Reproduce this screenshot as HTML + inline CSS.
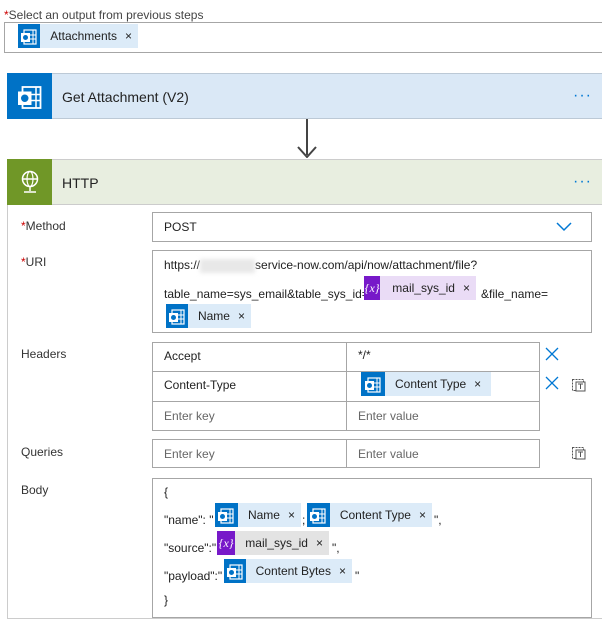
<!DOCTYPE html>
<html><head><style>
*{box-sizing:border-box;margin:0;padding:0}
body{width:602px;height:615px;overflow:hidden;background:#fff;font-family:"Segoe UI","Liberation Sans",sans-serif;font-size:12px;color:#222;position:relative}
.a{position:absolute}
.box{position:absolute;border:1px solid #a6a6a6;background:#fff}
.tok{position:absolute;height:24px;background:#dcebf8;display:flex;align-items:center;font-size:12px;color:#222;white-space:nowrap}
.tok .ic{width:24px;height:24px;background:#0072c6;display:flex;align-items:center;justify-content:center;margin-right:10px}
.tok.v .ic{background:#7719c9;color:#fff;font-family:"Liberation Serif",serif;font-style:italic;font-size:12px}
.tok .x{margin-left:8px;margin-right:6px;font-size:12px}
.lbl{position:absolute;left:21px;font-size:12px;color:#333}
.lbl b{color:#c00;font-weight:normal}
.cell{position:absolute;font-size:12px}
.ph{color:#666}
</style></head><body>
<svg width="0" height="0" style="position:absolute"><defs>
<g id="ol"><rect x="5" y="4" width="12" height="14" fill="none" stroke="#fff" stroke-width="1.2"/><rect x="2" y="7" width="9" height="9" fill="#fff"/><circle cx="6.5" cy="11.5" r="2.5" fill="#0072c6"/><path d="M11 9h6M11 13h6M14 4v14" stroke="#fff" stroke-width="1"/></g>
</defs></svg>
<div class="a" style="left:4px;top:8px;font-size:12px;color:#444"><span style="color:#c00">*</span>Select an output from previous steps</div>
<div class="box" style="left:4px;top:22px;width:600px;height:31px"></div>
<div class="tok" style="left:18px;top:24px;width:120px"><div class="ic"><svg width="20" height="20" viewBox="0 0 20 20"><use href="#ol"/></svg></div>Attachments<span class="x">×</span></div>

<div class="a" style="left:7px;top:73px;width:597px;height:46px;background:#dae8f6;border:1px solid #bcc9d6"></div>
<div class="a" style="left:7px;top:73px;width:45px;height:46px;background:#0072c6;display:flex;align-items:center;justify-content:center"><svg width="30" height="30" viewBox="0 0 20 20"><use href="#ol"/></svg></div>
<div class="a" style="left:62px;top:89px;font-size:14px">Get Attachment (V2)</div>
<div class="a" style="left:573px;top:87px;font-size:16px;color:#0078d4;letter-spacing:1px">···</div>

<div class="a" style="left:306px;top:119px;width:2px;height:36px;background:#444"></div>
<svg class="a" style="left:297px;top:146px" width="20" height="12"><path d="M1 1l9 10 9-10" fill="none" stroke="#444" stroke-width="2"/></svg>

<div class="a" style="left:7px;top:159px;width:597px;height:460px;border:1px solid #ccc;background:#fff"></div>
<div class="a" style="left:7px;top:159px;width:597px;height:46px;background:#e8eee0;border:1px solid #ccc"></div>
<div class="a" style="left:7px;top:159px;width:45px;height:46px;background:#709727;display:flex;align-items:center;justify-content:center"><svg width="22" height="26" viewBox="0 0 22 26"><circle cx="11" cy="10" r="7.5" fill="none" stroke="#fff" stroke-width="1.5"/><ellipse cx="11" cy="10" rx="3" ry="7.5" fill="none" stroke="#fff" stroke-width="1.2"/><path d="M3.5 10h15M11 18v4M5 23h12" stroke="#fff" stroke-width="1.5"/></svg></div>
<div class="a" style="left:62px;top:175px;font-size:14px">HTTP</div>
<div class="a" style="left:573px;top:173px;font-size:16px;color:#0078d4;letter-spacing:1px">···</div>

<div class="lbl" style="top:219px"><b>*</b>Method</div>
<div class="box" style="left:152px;top:212px;width:440px;height:30px"></div>
<div class="cell" style="left:164px;top:220px">POST</div>
<svg class="a" style="left:556px;top:222px" width="16" height="10"><path d="M1 1l7 7 7-7" fill="none" stroke="#0078d4" stroke-width="1.5"/></svg>

<div class="lbl" style="top:255px"><b>*</b>URI</div>
<div class="box" style="left:152px;top:250px;width:440px;height:83px"></div>
<div class="cell" style="left:164px;top:258px">https://<span style="display:inline-block;width:55px;height:14px;background:#e8e8e8;vertical-align:middle;filter:blur(2px)"></span>service-now.com/api/now/attachment/file?</div>
<div class="cell" style="left:164px;top:287px">table_name=sys_email&amp;table_sys_id=</div>
<div class="tok v" style="left:364px;top:276px;width:112px;background:#eadcf6"><div class="ic">{<i>x</i>}</div><span style="margin-left:2px">mail_sys_id</span><span class="x">×</span></div>
<div class="cell" style="left:481px;top:287px">&amp;file_name=</div>
<div class="tok" style="left:166px;top:304px;width:85px"><div class="ic"><svg width="20" height="20" viewBox="0 0 20 20"><use href="#ol"/></svg></div>Name<span class="x">×</span></div>

<div class="lbl" style="top:347px">Headers</div>
<div class="box" style="left:152px;top:342px;width:388px;height:89px"></div>
<div class="a" style="left:346px;top:342px;width:1px;height:89px;background:#a6a6a6"></div>
<div class="a" style="left:152px;top:371px;width:388px;height:1px;background:#a6a6a6"></div>
<div class="a" style="left:152px;top:401px;width:388px;height:1px;background:#a6a6a6"></div>
<div class="cell" style="left:164px;top:349px">Accept</div>
<div class="cell" style="left:358px;top:348px">*/*</div>
<div class="cell" style="left:164px;top:378px">Content-Type</div>
<div class="tok" style="left:361px;top:372px;width:130px;background:#dcebf8"><div class="ic"><svg width="20" height="20" viewBox="0 0 20 20"><use href="#ol"/></svg></div>Content Type<span class="x">×</span></div>
<div class="cell ph" style="left:164px;top:409px">Enter key</div>
<div class="cell ph" style="left:358px;top:409px">Enter value</div>
<svg class="a" style="left:545px;top:347px" width="14" height="14"><path d="M1 1l12 12M13 1L1 13" stroke="#0078d4" stroke-width="1.3"/></svg>
<svg class="a" style="left:545px;top:376px" width="14" height="14"><path d="M1 1l12 12M13 1L1 13" stroke="#0078d4" stroke-width="1.3"/></svg>
<svg class="a" style="left:571px;top:376px" width="15" height="16"><rect x="1.5" y="3.5" width="11" height="11" fill="none" stroke="#555" stroke-dasharray="2 1"/><rect x="5" y="6" width="9" height="9" fill="#fff" stroke="#555"/><path d="M7 8h5M9.5 8v5" stroke="#555"/></svg>

<div class="lbl" style="top:445px">Queries</div>
<div class="box" style="left:152px;top:439px;width:388px;height:29px"></div>
<div class="a" style="left:346px;top:439px;width:1px;height:29px;background:#a6a6a6"></div>
<div class="cell ph" style="left:164px;top:447px">Enter key</div>
<div class="cell ph" style="left:358px;top:447px">Enter value</div>
<svg class="a" style="left:571px;top:444px" width="15" height="16"><rect x="1.5" y="3.5" width="11" height="11" fill="none" stroke="#555" stroke-dasharray="2 1"/><rect x="5" y="6" width="9" height="9" fill="#fff" stroke="#555"/><path d="M7 8h5M9.5 8v5" stroke="#555"/></svg>

<div class="lbl" style="top:483px">Body</div>
<div class="box" style="left:152px;top:478px;width:440px;height:140px"></div>
<div class="cell" style="left:164px;top:485px">{</div>
<div class="cell" style="left:164px;top:513px">"name": "</div>
<div class="tok" style="left:215px;top:503px;width:86px"><div class="ic"><svg width="20" height="20" viewBox="0 0 20 20"><use href="#ol"/></svg></div><span>Name</span><span class="x">×</span></div>
<div class="cell" style="left:302px;top:513px">;</div>
<div class="tok" style="left:307px;top:503px;width:125px"><div class="ic"><svg width="20" height="20" viewBox="0 0 20 20"><use href="#ol"/></svg></div>Content Type<span class="x">×</span></div>
<div class="cell" style="left:434px;top:513px">",</div>
<div class="cell" style="left:164px;top:541px">"source":"</div>
<div class="tok v" style="left:217px;top:531px;width:112px;background:#e3e3e3"><div class="ic">{<i>x</i>}</div>mail_sys_id<span class="x">×</span></div>
<div class="cell" style="left:332px;top:541px">",</div>
<div class="cell" style="left:164px;top:569px">"payload":"</div>
<div class="tok" style="left:224px;top:559px;width:128px"><div class="ic"><svg width="20" height="20" viewBox="0 0 20 20"><use href="#ol"/></svg></div>Content Bytes<span class="x">×</span></div>
<div class="cell" style="left:355px;top:569px">"</div>
<div class="cell" style="left:164px;top:593px">}</div>
</body></html>
